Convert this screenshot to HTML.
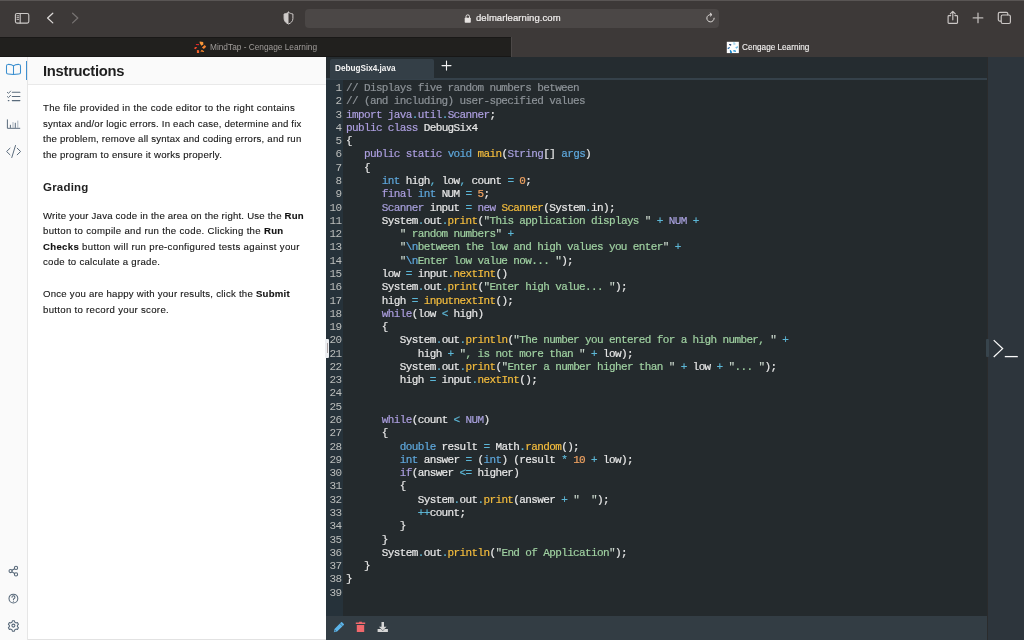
<!DOCTYPE html>
<html lang="en">
<head>
<meta charset="utf-8">
<title>MindTap - Cengage Learning</title>
<style>
*{box-sizing:border-box;margin:0;padding:0}
html,body{width:1024px;height:640px;overflow:hidden;background:#242a2d}
body{position:relative;font-family:"Liberation Sans",sans-serif;-webkit-font-smoothing:antialiased}
.abs{position:absolute}
#urltext,#tab1t,#tab2t,#ptitle,.ptxt,#h2,#etabt,#nums,#code{will-change:transform}
svg{position:absolute;overflow:visible}

/* ---------- browser chrome ---------- */
#topline{left:0;top:0;width:1024px;height:1px;background:#595554}
#toolbar{left:0;top:1px;width:1024px;height:36px;background:#3d3938}
#urlbar{left:305px;top:9px;width:414px;height:19px;border-radius:4px;background:#4b4746}
#urltext{left:476px;top:8.1px;height:19px;line-height:19px;font-size:9.5px;color:#f1efee;white-space:nowrap;letter-spacing:0.066px;-webkit-text-stroke:0.2px #f1efee}
#tabbar{left:0;top:37px;width:1024px;height:20px;background:#3d3938}
#tab1{left:0;top:37px;width:511px;height:20px;background:#21201e;border-top:1px solid #191817;border-bottom:1px solid #181716}
#tabsep{left:511px;top:37px;width:1px;height:20px;background:#4c4847}
#tab1t{left:209.5px;top:37px;height:20px;line-height:20px;font-size:8.3px;color:#9f9b99;white-space:nowrap}
#tab2t{left:742px;top:38px;height:20px;line-height:20px;font-size:8.2px;color:#f3f1f0;white-space:nowrap;-webkit-text-stroke:0.12px #f3f1f0}

/* ---------- left rail ---------- */
#rail{left:0;top:57px;width:28px;height:583px;background:#fafafa;border-right:1px solid #e6e6e6}
#pbot{left:28px;top:639px;width:298.4px;height:1px;background:#e2e2e2;z-index:2}
#railmark{left:26px;top:61px;width:1.4px;height:19px;background:#3f8fd0}

/* ---------- instructions panel ---------- */
#panel{left:28px;top:57px;width:298.4px;height:583px;background:#fff}
#phead{left:28px;top:57px;width:298.4px;height:28px;background:#fafafa;border-bottom:1px solid #e9e9e9}
#ptitle{left:43.3px;top:58.1px;height:27px;line-height:27px;font-size:14.8px;letter-spacing:-0.29px;font-weight:bold;color:#1f1f1f;white-space:nowrap}
.ptxt{left:43.3px;height:16px;font-size:9.6px;line-height:16px;color:#161616;white-space:nowrap;-webkit-text-stroke:0.12px #161616}
.ptxt b{font-weight:bold;color:#111}
#h2{left:43.4px;top:178.4px;height:18px;line-height:18px;font-size:11.5px;letter-spacing:0.2px;font-weight:bold;color:#1f1f1f;white-space:nowrap}

/* ---------- editor ---------- */
#editor{left:326.4px;top:57px;width:660.6px;height:583px;background:#242a2d}
#etabs{left:326.4px;top:57px;width:660.6px;height:21px;background:#252c30}
#etabline{left:326.4px;top:78px;width:660.6px;height:2.2px;background:#35414a}
#etab{left:330px;top:59px;width:104px;height:20px;background:#343f47;border-radius:2px 2px 0 0}
#etabt{left:334.8px;top:59.9px;height:18px;line-height:18px;font-size:8.2px;font-weight:bold;color:#f4f4f4;white-space:nowrap}
#gutter{left:326.4px;top:80.4px;width:17.1px;height:535.3px;background:#26323a}
#nums{left:326.7px;top:82px;width:14.5px;text-align:right;color:#bcbebc}
#code{left:346px;top:82px;color:#e9e9e9}
#nums,#code{font-family:"Liberation Mono",monospace;font-size:11px;letter-spacing:-0.626px}
#code{-webkit-text-stroke:0.18px}
.ln{height:13.285px;line-height:13.285px;white-space:pre}
#botbar{left:326.4px;top:615.7px;width:660.6px;height:24.3px;background:#333d44}
#rpanel{left:987px;top:57px;width:37px;height:583px;background:#2d353c;border-left:1px solid #2a2b2c}
#lhandle{left:324.5px;top:339px;width:4.5px;height:19px;background:#eceef1;border-radius:1px}
#lhandlei{left:326.6px;top:343px;width:0.8px;height:10px;background:#a59c9c}
#rhandle{left:985.5px;top:339px;width:3.5px;height:18px;background:#37444c;border-radius:1px}

.c{color:#8d9398}.k{color:#ad9fe0}.t{color:#a9a1de}.p{color:#5fa9de}.f{color:#f6be3d}
.n{color:#f3a462}.s{color:#a0d2a2}.q{color:#c9d6cb}.o{color:#5db7d6}.e{color:#5fa9de}
</style>
</head>
<body>
<!-- browser chrome -->
<div class="abs" id="toolbar"></div>
<div class="abs" id="topline"></div>
<div class="abs" id="urlbar"></div>
<div class="abs" id="urltext">delmarlearning.com</div>
<div class="abs" id="tabbar"></div>
<div class="abs" id="tab1"></div>
<div class="abs" id="tabsep"></div>
<div class="abs" id="tab1t">MindTap - Cengage Learning</div>
<div class="abs" id="tab2t">Cengage Learning</div>

<!-- left rail -->
<div class="abs" id="rail"></div>
<div class="abs" id="pbot"></div>
<div class="abs" id="railmark"></div>

<!-- instructions -->
<div class="abs" id="panel"></div>
<div class="abs" id="phead"></div>
<div class="abs" id="ptitle">Instructions</div>
<div class="abs" id="h2">Grading</div>
<div class="abs ptxt" style="top:100.08px;letter-spacing:0.319px">The file provided in the code editor to the right contains</div>
<div class="abs ptxt" style="top:115.78px;letter-spacing:0.207px">syntax and/or logic errors. In each case, determine and fix</div>
<div class="abs ptxt" style="top:131.48px;letter-spacing:0.221px">the problem, remove all syntax and coding errors, and run</div>
<div class="abs ptxt" style="top:146.98px;letter-spacing:0.257px">the program to ensure it works properly.</div>
<div class="abs ptxt" style="top:207.68px;letter-spacing:0.217px">Write your Java code in the area on the right. Use the <b>Run</b></div>
<div class="abs ptxt" style="top:223.38px;letter-spacing:0.318px">button to compile and run the code. Clicking the <b>Run</b></div>
<div class="abs ptxt" style="top:238.98px;letter-spacing:0.329px"><b>Checks</b> button will run pre-configured tests against your</div>
<div class="abs ptxt" style="top:254.48px;letter-spacing:0.285px">code to calculate a grade.</div>
<div class="abs ptxt" style="top:286.18px;letter-spacing:0.248px">Once you are happy with your results, click the <b>Submit</b></div>
<div class="abs ptxt" style="top:301.88px;letter-spacing:0.310px">button to record your score.</div>
<!-- editor -->
<div class="abs" id="editor"></div>
<div class="abs" id="etabs"></div>
<div class="abs" id="etabline"></div>
<div class="abs" id="etab"></div>
<div class="abs" id="etabt">DebugSix4.java</div>
<div class="abs" id="gutter"></div>
<div class="abs" id="nums">
<div class="ln">1</div>
<div class="ln">2</div>
<div class="ln">3</div>
<div class="ln">4</div>
<div class="ln">5</div>
<div class="ln">6</div>
<div class="ln">7</div>
<div class="ln">8</div>
<div class="ln">9</div>
<div class="ln">10</div>
<div class="ln">11</div>
<div class="ln">12</div>
<div class="ln">13</div>
<div class="ln">14</div>
<div class="ln">15</div>
<div class="ln">16</div>
<div class="ln">17</div>
<div class="ln">18</div>
<div class="ln">19</div>
<div class="ln">20</div>
<div class="ln">21</div>
<div class="ln">22</div>
<div class="ln">23</div>
<div class="ln">24</div>
<div class="ln">25</div>
<div class="ln">26</div>
<div class="ln">27</div>
<div class="ln">28</div>
<div class="ln">29</div>
<div class="ln">30</div>
<div class="ln">31</div>
<div class="ln">32</div>
<div class="ln">33</div>
<div class="ln">34</div>
<div class="ln">35</div>
<div class="ln">36</div>
<div class="ln">37</div>
<div class="ln">38</div>
<div class="ln">39</div>
</div>
<div class="abs" id="code">
<div class="ln"><span class="c">// Displays five random numbers between</span></div>
<div class="ln"><span class="c">// (and including) user-specified values</span></div>
<div class="ln"><span class="k">import</span> <span class="k">java</span><span class="o">.</span><span class="k">util</span><span class="o">.</span><span class="k">Scanner</span>;</div>
<div class="ln"><span class="k">public</span> <span class="k">class</span> DebugSix4</div>
<div class="ln">{</div>
<div class="ln">   <span class="k">public</span> <span class="k">static</span> <span class="p">void</span> <span class="f">main</span>(<span class="t">String</span>[] <span class="p">args</span>)</div>
<div class="ln">   {</div>
<div class="ln">      <span class="p">int</span> high<span class="o">,</span> low<span class="o">,</span> count <span class="o">=</span> <span class="n">0</span>;</div>
<div class="ln">      <span class="k">final</span> <span class="p">int</span> NUM <span class="o">=</span> <span class="n">5</span>;</div>
<div class="ln">      <span class="t">Scanner</span> input <span class="o">=</span> <span class="k">new</span> <span class="f">Scanner</span>(System<span class="o">.</span>in);</div>
<div class="ln">      System<span class="o">.</span>out<span class="o">.</span><span class="f">print</span>(<span class="q">"</span><span class="s">This application displays </span><span class="q">"</span> <span class="o">+</span> <span class="t">NUM</span> <span class="o">+</span></div>
<div class="ln">         <span class="q">"</span><span class="s"> random numbers</span><span class="q">"</span> <span class="o">+</span></div>
<div class="ln">         <span class="q">"</span><span class="e">\n</span><span class="s">between the low and high values you enter</span><span class="q">"</span> <span class="o">+</span></div>
<div class="ln">         <span class="q">"</span><span class="e">\n</span><span class="s">Enter low value now... </span><span class="q">"</span>);</div>
<div class="ln">      low <span class="o">=</span> input<span class="o">.</span><span class="f">nextInt</span>()</div>
<div class="ln">      System<span class="o">.</span>out<span class="o">.</span><span class="f">print</span>(<span class="q">"</span><span class="s">Enter high value... </span><span class="q">"</span>);</div>
<div class="ln">      high <span class="o">=</span> <span class="f">inputnextInt</span>();</div>
<div class="ln">      <span class="k">while</span>(low <span class="o">&lt;</span> high)</div>
<div class="ln">      {</div>
<div class="ln">         System<span class="o">.</span>out<span class="o">.</span><span class="f">println</span>(<span class="q">"</span><span class="s">The number you entered for a high number, </span><span class="q">"</span> <span class="o">+</span></div>
<div class="ln">            high <span class="o">+</span> <span class="q">"</span><span class="s">, is not more than </span><span class="q">"</span> <span class="o">+</span> low);</div>
<div class="ln">         System<span class="o">.</span>out<span class="o">.</span><span class="f">print</span>(<span class="q">"</span><span class="s">Enter a number higher than </span><span class="q">"</span> <span class="o">+</span> low <span class="o">+</span> <span class="q">"</span><span class="s">... </span><span class="q">"</span>);</div>
<div class="ln">         high <span class="o">=</span> input<span class="o">.</span><span class="f">nextInt</span>();</div>
<div class="ln"></div>
<div class="ln"></div>
<div class="ln">      <span class="k">while</span>(count <span class="o">&lt;</span> <span class="t">NUM</span>)</div>
<div class="ln">      {</div>
<div class="ln">         <span class="p">double</span> result <span class="o">=</span> Math<span class="o">.</span><span class="f">random</span>();</div>
<div class="ln">         <span class="p">int</span> answer <span class="o">=</span> (<span class="p">int</span>) (result <span class="o">*</span> <span class="n">10</span> <span class="o">+</span> low);</div>
<div class="ln">         <span class="k">if</span>(answer <span class="o">&lt;=</span> higher)</div>
<div class="ln">         {</div>
<div class="ln">            System<span class="o">.</span>out<span class="o">.</span><span class="f">print</span>(answer <span class="o">+</span> <span class="q">"</span><span class="s">  </span><span class="q">"</span>);</div>
<div class="ln">            <span class="o">++</span>count;</div>
<div class="ln">         }</div>
<div class="ln">      }</div>
<div class="ln">      System<span class="o">.</span>out<span class="o">.</span><span class="f">println</span>(<span class="q">"</span><span class="s">End of Application</span><span class="q">"</span>);</div>
<div class="ln">   }</div>
<div class="ln">}</div>
<div class="ln"></div>
</div>
<div class="abs" id="botbar"></div>
<div class="abs" id="rpanel"></div>
<div class="abs" id="lhandle"></div>
<div class="abs" id="lhandlei"></div>
<div class="abs" id="rhandle"></div>

<svg class="abs" id="icons" style="left:0;top:0" width="1024" height="640" viewBox="0 0 1024 640" fill="none" stroke-linecap="round" stroke-linejoin="round">
<!-- toolbar: sidebar toggle -->
<g stroke="#cdcac8" stroke-width="1.100">
<rect x="15.4" y="13.5" width="13.4" height="9.6" rx="1.6"/>
<path d="M20.2 13.6V23"/>
<path d="M17 15.8h1.6M17 17.6h1.6M17 19.4h1.6" stroke-width="0.9"/>
</g>
<!-- back / forward -->
<path d="M52.8 13.2L47.6 18l5.2 4.900" stroke="#dcd9d7" stroke-width="1.250"/>
<path d="M72.6 13.2L77.8 18l-5.2 4.900" stroke="#767271" stroke-width="1.250"/>
<!-- shield -->
<path d="M288.5 12.3c-1.5 1-3 1.5-4.4 1.7v4.6c0 2.6 1.8 4.4 4.4 5.4c2.600 -1 4.400 -2.800 4.400 -5.400v-4.600c-1.400 -0.200 -2.900 -0.700 -4.400 -1.700z" stroke="#cfcbc9" stroke-width="1"/>
<path d="M288.5 12.3c-1.5 1-3 1.500-4.400 1.700v4.600c0 2.600 1.800 4.400 4.400 5.400z" fill="#cfcbc9" stroke="none"/>
<!-- lock -->
<g>
<rect x="464.7" y="17.8" width="6.1" height="5" rx="0.8" fill="#e6e3e1" stroke="none"/>
<path d="M466 18v-1.400a1.750 1.750 0 0 1 3.500 0V18" stroke="#e6e3e1" stroke-width="1"/>
</g>
<!-- reload -->
<g stroke="#e0dddb" stroke-width="1">
<path d="M711 14.600A3.650 3.650 0 1 0 714.150 18.200"/>
<path d="M710.200 13.100l1.800 1.500l-1.700 1.500"/>
</g>
<!-- share -->
<g stroke="#cbc7c5" stroke-width="1.150">
<path d="M950.700 15.600h-1.800a0.800 0.800 0 0 0 -0.800 0.800v6.100a0.800 0.800 0 0 0 0.800 0.800h7.800a0.800 0.800 0 0 0 0.800 -0.800v-6.100a0.800 0.800 0 0 0 -0.800 -0.800h-1.800"/>
<path d="M952.800 19.800V11.600M950.300 13.900l2.500 -2.500l2.500 2.500"/>
</g>
<!-- plus -->
<path d="M973.200 17.900h9.600M978 13.100v9.600" stroke="#bdb9b7" stroke-width="1.300"/>
<!-- tabs -->
<g stroke="#cbc7c5" stroke-width="1.150">
<path d="M1001 21.100h-1.200a1.500 1.500 0 0 1 -1.500 -1.500v-5.800a1.500 1.500 0 0 1 1.500 -1.500h6.500a1.500 1.500 0 0 1 1.500 1.500v1"/>
<rect x="1001.200" y="15" width="9.200" height="8.500" rx="1.500"/>
</g>
<!-- tab1 favicon (orange star) -->
<g stroke="none">
<path d="M199.700 41.400L203.200 42L203.400 44.600L201.300 45.800L199.700 43z" fill="#f7973a"/>
<path d="M201.900 47.400L204.700 45L206.200 46.800L203.800 49z" fill="#f5822e"/>
<path d="M200.300 51.500L201.800 49.700L204.100 51.200L204 52.100z" fill="#f5832c"/>
<path d="M196.900 50L199.100 50.200L199.100 53.100L196.900 52.900z" fill="#f4622d"/>
<path d="M194 48.400L195 46.900L197.200 47.100L195.800 49.300z" fill="#ee4528"/>
<path d="M195.800 44L199 43.900L199 45.200L196 45z" fill="#d9272a"/>
</g>
<!-- tab2 favicon -->
<g stroke="none">
<rect x="726.800" y="41.800" width="12.050" height="11.300" fill="#fdfdfd"/>
<path d="M733.300 42.100L734.900 42.400L735.800 44.300L733.700 45.300L733.300 43.900z" fill="#a9d8f0"/>
<path d="M735.200 47.400L737.700 45.900L738 47.400L736.400 48.800z" fill="#6ebde6"/>
<path d="M733.100 50.300L735.200 50L736.100 51.200L735.800 51.900L733.300 51.500z" fill="#3d9fd8"/>
<path d="M729.800 50.200L730.800 50L732 52.100L731.800 53.100L730.200 53.100z" fill="#1584c9"/>
<path d="M727.900 47.700L729.800 46.900L729.900 47.700L728.600 49L727.300 48.500z" fill="#1a5fa3"/>
<path d="M729 44L731.100 44.200L731.400 44.900L730.500 45.800L729.300 44.900z" fill="#0f2f5e"/>
</g>
<!-- rail: book -->
<g stroke="#3b8fcf" stroke-width="1.050">
<path d="M13.500 65.800c-1.200 -1 -3 -1.500 -5.500 -1.400c-0.900 0 -1.500 0.600 -1.500 1.500v6.600c0 0.900 0.600 1.500 1.500 1.500c2.500 0 4.300 0.100 5.500 0.500c1.200 -0.400 3 -0.500 5.500 -0.500c0.900 0 1.500 -0.600 1.500 -1.500v-6.600c0 -0.900 -0.600 -1.500 -1.500 -1.500c-2.500 -0.100 -4.300 0.400 -5.500 1.400z"/>
<path d="M13.500 65.800v8.700"/>
</g>
<!-- rail: checklist -->
<g stroke="#5a6b7c" stroke-width="1">
<path d="M12.300 92.300h7.600M12.300 96.500h7.600M12.300 100.600h7.600" stroke-width="1.100"/>
<path d="M7.300 92.300l1.200 1.100l2.100 -2.300M7.300 96.500l1.200 1.100l2.100 -2.300" stroke-width="0.900"/>
<path d="M8.300 100.600h0.600" stroke-width="1.200"/>
</g>
<!-- rail: chart -->
<g stroke="#5a6b7c">
<path d="M7.400 119.800v8.500h12.400" stroke-width="1"/>
<path d="M10.400 125.200v2.300M15.300 123.200v4.300" stroke-width="1"/>
<path d="M13 122.500v5M17.800 121v6.500" stroke-width="1" stroke="#a9b4bf"/>
</g>
<!-- rail: code -->
<g stroke="#5a6b7c" stroke-width="1">
<path d="M10 148.200l-3.400 3.300l3.400 3.300"/>
<path d="M17.200 148.200l3.400 3.300l-3.400 3.300"/>
<path d="M15.500 145.500l-3.700 12"/>
</g>
<!-- rail: share -->
<g stroke="#566778" stroke-width="1.050">
<circle cx="10.600" cy="571" r="1.600"/><circle cx="16" cy="567.900" r="1.600"/><circle cx="16" cy="574.400" r="1.600"/>
<path d="M12 570.200l2.600 -1.500M12 571.900l2.600 1.600"/>
</g>
<!-- rail: help -->
<g stroke="#566778" stroke-width="1.050">
<circle cx="13.400" cy="598.600" r="4.400"/>
<path d="M12 597.300a1.450 1.450 0 1 1 2.200 1.200c-0.500 0.300 -0.800 0.600 -0.800 1.200"/>
<path d="M13.400 601.200v0.100" stroke-width="1.100"/>
</g>
<!-- rail: gear -->
<g stroke="#566778" stroke-width="1.050">
<path d="M12.400 620.800h2l0.400 1.400l1.200 0.700l1.400 -0.400l1 1.800l-1 1l0 1.400l1 1l-1 1.800l-1.400 -0.400l-1.200 0.700l-0.400 1.400h-2l-0.400 -1.400l-1.200 -0.700l-1.400 0.400l-1 -1.800l1 -1l0 -1.400l-1 -1l1 -1.800l1.400 0.400l1.200 -0.700z"/>
<circle cx="13.400" cy="625.600" r="1.500"/>
</g>
<!-- editor plus -->
<path d="M442 65.600h9M446.500 61.100v9" stroke="#f2f2f2" stroke-width="1.100"/>
<!-- terminal -->
<path d="M994.200 340.600l8.400 8l-8.400 8" stroke="#fafafa" stroke-width="1.300" stroke-linecap="square" stroke-linejoin="miter"/>
<path d="M1004.800 356.600h13" stroke="#fafafa" stroke-width="1.300" stroke-linecap="butt"/>
<!-- bottom bar icons -->
<g stroke="none">
<path d="M341.100 622.300a0.700 0.700 0 0 1 1 0l1.700 1.700a0.700 0.700 0 0 1 0 1l-6.700 6.600l-3.300 0.700l0.700 -3.300z" fill="#5cb5ea"/>
<path d="M339.900 623.500l2.700 2.700" stroke="#333d44" stroke-width="0.550"/>
<path d="M335 630.100l1 1l-1.500 0.400z" fill="#333d44"/>
<path d="M355.800 622.600h3.300v-0.800h2.800v0.800h3.300v1.300h-9.400zM356.800 624.900h7.400v7.200h-7.400z" fill="#f0686c"/>
<path d="M381.500 621.900h2.500v4.800h2.600l-3.850 3.800l-3.850 -3.800h2.600zM377.600 629h3.200l1.950 1.900l1.950 -1.900h3.200v3.100h-10.300z" fill="#d6d6d6"/>
</g>
</svg>

</body>
</html>
